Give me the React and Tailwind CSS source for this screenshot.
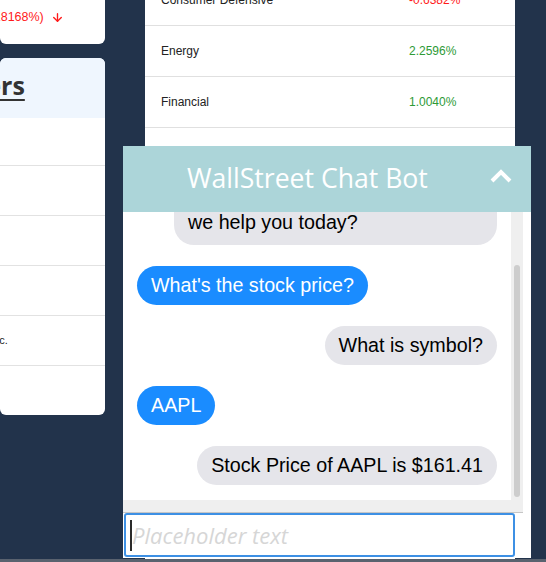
import React from 'react';
import { ArrowDown } from 'lucide-react';

const sectors = [
  { name: 'Consumer Defensive', pct: '-0.6382%', up: false },
  { name: 'Energy', pct: '2.2596%', up: true },
  { name: 'Financial', pct: '1.0040%', up: true },
  { name: 'Financial Services', pct: '0.9986%', up: true },
  { name: 'Healthcare', pct: '0.4471%', up: true },
  { name: 'Industrials', pct: '0.8812%', up: true },
  { name: 'Real Estate', pct: '-0.2145%', up: false },
  { name: 'Technology', pct: '1.3307%', up: true },
  { name: 'Utilities', pct: '-0.5120%', up: false },
];

const messages = [
  { from: 'bot', text: 'What\'s the stock price?' },
  { from: 'me', text: 'What is symbol?' },
  { from: 'bot', text: 'AAPL' },
  { from: 'me', text: 'Stock Price of AAPL is $161.41' },
];

const Bubble = ({ from, children }) => {
  const mine = from === 'me';
  return (
    <div className={mine ? 'flex justify-end' : 'flex justify-start'}>
      <div
        className={
          mine
            ? 'rounded-[20px] bg-[#e5e5ea] px-[14px] py-2 text-[19.7px] leading-[23px] text-black'
            : 'rounded-[20px] bg-[#1a8cff] px-[14px] py-2 text-[19.7px] leading-[23px] text-white'
        }
      >
        {children}
      </div>
    </div>
  );
};

const ChatBot = () => (
  <div className="absolute left-[123px] top-[146px] flex h-[412px] w-[408px] flex-col bg-white">
    {/* header */}
    <div className="flex h-[66px] shrink-0 items-center bg-[#acd5d9] pl-[64px] pr-[19px]">
      <span className="flex-1 text-[26.6px] text-white" style={{ fontFamily: '"Open Sans", sans-serif' }}>
        WallStreet Chat Bot
      </span>
      <svg width="22" height="14" viewBox="0 0 22 14" className="-mt-[6px]">
        <polyline points="2,12 11,3 20,12" fill="none" stroke="white" strokeWidth="4" />
      </svg>
    </div>

    {/* scroll area */}
    <div className="flex h-[300px] w-[400px] flex-col">
      <div className="flex h-[288px]">
        <div className="flex w-[388px] flex-col justify-end gap-[21px] overflow-hidden px-[14px] pb-[15px]">
          <div className="flex justify-end">
            <div className="w-[323px] rounded-[20px] bg-[#e5e5ea] px-[14px] pb-[11px] pt-2 text-[19.7px] leading-[23px] text-black">
              Hi! How can
              <br />
              we help you today?
            </div>
          </div>
          {messages.map((m, i) => (
            <Bubble key={i} from={m.from}>{m.text}</Bubble>
          ))}
        </div>
        <div className="flex w-[12px] flex-col bg-[#efefef] pl-[3px] pr-[3px] pt-[53px] pb-[3px]">
          <div className="flex-1 rounded-full bg-[#cdcdcd]" />
        </div>
      </div>
      <div className="h-[12px] bg-[#efefef]" />
    </div>

    {/* input */}
    <div className="h-px w-[400px] bg-[#c6c6c6]" />
    <div className="pl-px pr-[16px]">
      <div className="flex h-[44px] items-center rounded-[3px] border-2 border-[#3d90e4] pl-[4px]">
        <span className="h-[31px] w-[2px] bg-[#2b2b2b]" />
        <span className="text-[22px] italic text-[#d6d6d6]" style={{ fontFamily: '"Open Sans", sans-serif' }}>
          Placeholder text
        </span>
      </div>
    </div>
  </div>
);

export default function App() {
  return (
    <div className="relative flex h-[562px] w-[546px] flex-col overflow-hidden bg-[#22334b]" style={{ fontFamily: '"Liberation Sans", Arial, sans-serif' }}>
      <div className="flex h-[559px] gap-[40px]">
        {/* left column */}
        <div className="flex w-[105px] shrink-0 flex-col">
          <div className="flex h-[44px] items-center rounded-b-md bg-white pb-[9px]">
            <span className="-ml-[25px] whitespace-nowrap text-[12.5px] text-[#ff1a1a]">(-0.18168%)</span>
            <ArrowDown className="ml-[7px] h-[13px] w-[13px] text-[#ff1a1a]" strokeWidth={2.5} />
          </div>
          <div className="mt-[14px] flex h-[357px] flex-col overflow-hidden rounded-md bg-white">
            <div className="flex h-[60px] items-end bg-[#eff6fe] pb-[14px]">
              <span className="-ml-[67px] whitespace-nowrap text-[25px] font-bold text-[#333] underline underline-offset-[4px]" style={{ fontFamily: '"Open Sans", sans-serif' }}>
                Movers
              </span>
            </div>
            <div className="h-[47px]" />
            {['', '', '', 'Apple Inc.', ''].map((t, i) => (
              <div key={i} className="flex h-[50px] items-center border-t border-[#e2e2e2] text-[11px] text-[#222]">
                {t && <span className="-ml-[41px] whitespace-nowrap">{t}</span>}
              </div>
            ))}
          </div>
        </div>

        {/* sector table */}
        <div className="-mt-[25px] w-[370px] shrink-0 bg-white">
          {sectors.map((s) => (
            <div key={s.name} className="grid h-[51px] grid-cols-[248px_1fr] items-center border-b border-[#e0e0e0] pl-4 text-[12px]">
              <span className="text-[#222]">{s.name}</span>
              <span className={s.up ? 'text-[#2e9a36]' : 'text-[#ff1a1a]'}>{s.pct}</span>
            </div>
          ))}
        </div>
      </div>
      <div className="h-[3px] bg-[#59626f]" />

      <ChatBot />
    </div>
  );
}
